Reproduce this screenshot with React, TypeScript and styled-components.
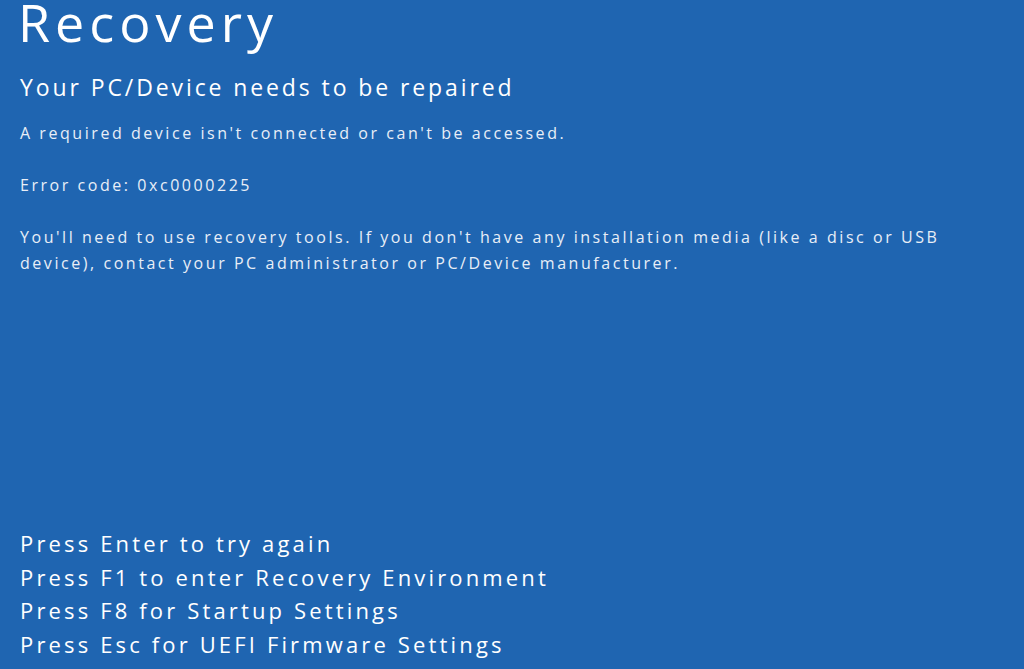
import styled, { createGlobalStyle } from "styled-components";

const GlobalStyle = createGlobalStyle`
    html, body {
        margin: 0;
        padding: 0;
        height: 100%;
        background: #1f65b1;
    }
    #root {
        height: 100%;
    }
`;

const Screen = styled.main`
    box-sizing: border-box;
    height: 669px;
    overflow: hidden;
    display: flex;
    flex-direction: column;
    padding: 0 20px;
    background: #1f65b1;
    color: #ffffff;
    font-family: "Open Sans", "Noto Sans", sans-serif;
`;

const Title = styled.h1`
    margin: 0 0 0 -2px;
    font-size: 52px;
    font-weight: 400;
    line-height: 44px;
    letter-spacing: 5px;
`;

const Subtitle = styled.h2`
    margin: 28px 0 0;
    font-size: 23px;
    font-weight: 400;
    line-height: 30px;
    letter-spacing: 2.9px;
`;

const Message = styled.p<{ $gap?: number }>`
    margin: ${(p) => p.$gap ?? 26}px 0 0;
    font-size: 16px;
    line-height: 26px;
    color: #e8eef7;
    letter-spacing: 2.55px;
`;

const Options = styled.ul`
    list-style: none;
    margin: auto 0 8px;
    padding: 0;
`;

const Option = styled.li`
    font-size: 22px;
    line-height: 33.5px;
    letter-spacing: 3.15px;
`;

const options = [
    "Press Enter to try again",
    "Press F1 to enter Recovery Environment",
    "Press F8 for Startup Settings",
    "Press Esc for UEFI Firmware Settings",
];

export default function App() {
    return (
        <>
            <GlobalStyle />
            <Screen>
                <Title>Recovery</Title>
                <Subtitle>Your PC/Device needs to be repaired</Subtitle>
                <Message $gap={18}>
                    A required device isn't connected or can't be accessed.
                </Message>
                <Message>Error code: 0xc0000225</Message>
                <Message>
                    You'll need to use recovery tools. If you don't have any installation media (like a disc or USB
                    <br />
                    device), contact your PC administrator or PC/Device manufacturer.
                </Message>
                <Options>
                    {options.map((o) => (
                        <Option key={o}>{o}</Option>
                    ))}
                </Options>
            </Screen>
        </>
    );
}
